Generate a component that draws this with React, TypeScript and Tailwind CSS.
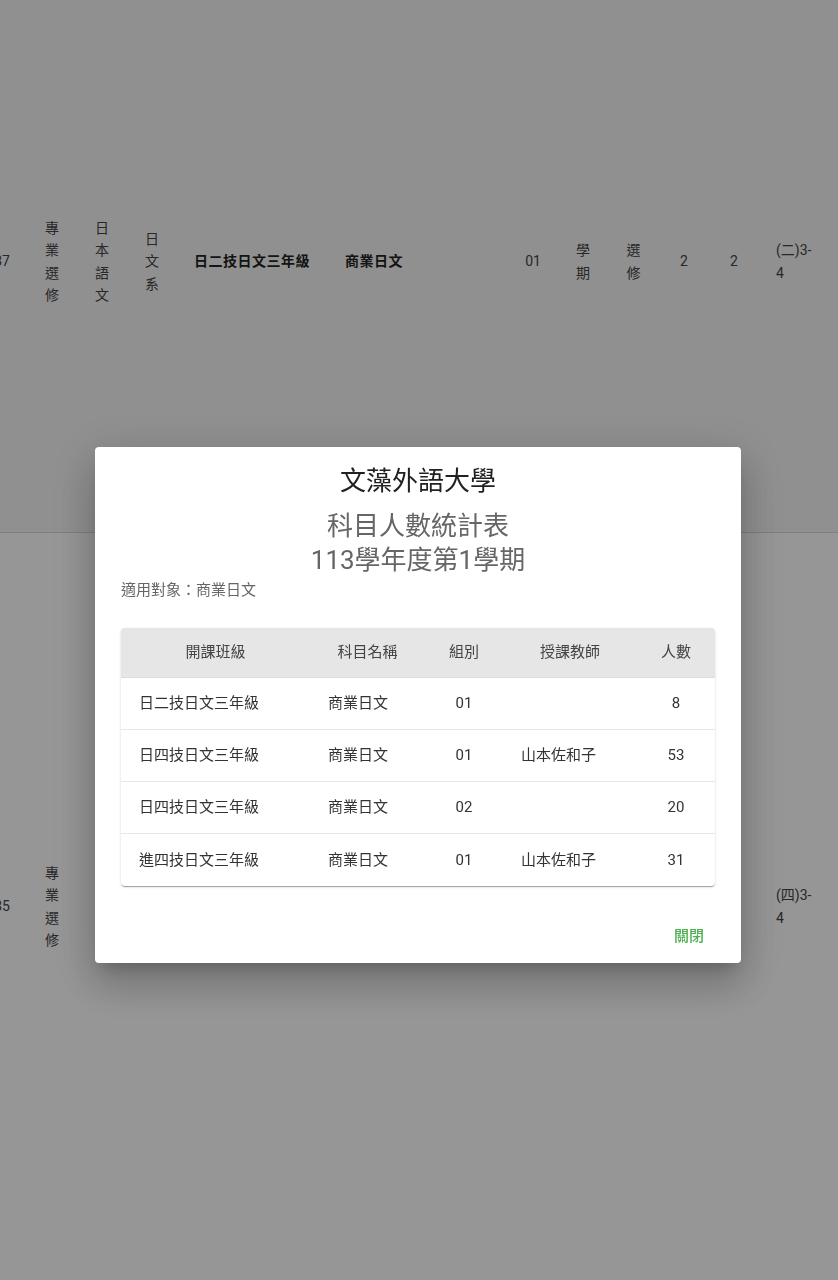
import React from 'react';

type Row = {
  id: string;
  kind: string;
  dept: string;
  school: string;
  klass: string;
  subject: string;
  group: string;
  term: string;
  type: string;
  credit: number | string;
  hours: number | string;
  time: [string, string];
};

const courseRows: Row[] = [
  {
    id: '37',
    kind: '專業選修',
    dept: '日本語文',
    school: '日文系',
    klass: '日二技日文三年級',
    subject: '商業日文',
    group: '01',
    term: '學期',
    type: '選修',
    credit: 2,
    hours: 2,
    time: ['(二)3-', '4'],
  },
  {
    id: '35',
    kind: '專業選修',
    dept: '',
    school: '',
    klass: '',
    subject: '',
    group: '',
    term: '',
    type: '',
    credit: '',
    hours: '',
    time: ['(四)3-', '4'],
  },
];

const stats = [
  { klass: '日二技日文三年級', subject: '商業日文', group: '01', teacher: '', count: 8 },
  { klass: '日四技日文三年級', subject: '商業日文', group: '01', teacher: '山本佐和子', count: 53 },
  { klass: '日四技日文三年級', subject: '商業日文', group: '02', teacher: '', count: 20 },
  { klass: '進四技日文三年級', subject: '商業日文', group: '01', teacher: '山本佐和子', count: 31 },
];

// one character per line, like the narrow cells of the course table
const Stack: React.FC<{ text: string }> = ({ text }) => (
  <div className="flex flex-col items-center leading-[22.5px]">
    {text.split('').map((ch, i) => (
      <span key={i}>{ch}</span>
    ))}
  </div>
);

const CourseRow: React.FC<{ row: Row; first: boolean }> = ({ row, first }) => (
  <div
    className={
      first
        ? 'flex items-center h-[533px] pb-[9px] bg-[#f5f5f5] border-b border-[#d6d6d6]'
        : 'flex items-center h-[747px] bg-white'
    }
  >
    <div className="w-[10px] flex justify-end whitespace-nowrap">{row.id}</div>
    <div className="w-[17px]" />
    <div className="w-[50px] flex justify-center"><Stack text={row.kind} /></div>
    <div className="w-[50px] flex justify-center"><Stack text={row.dept} /></div>
    <div className="w-[50px] flex justify-center"><Stack text={row.school} /></div>
    <div className="w-[150px] text-center font-semibold tracking-[0.5px] text-[#222]">{row.klass}</div>
    <div className="w-[94px] text-center font-semibold tracking-[0.5px] text-[#222]">{row.subject}</div>
    <div className="w-[87px]" />
    <div className="w-[50px] text-center">{row.group}</div>
    <div className="w-[50px] flex justify-center"><Stack text={row.term} /></div>
    <div className="w-[51px] flex justify-center"><Stack text={row.type} /></div>
    <div className="w-[50px] text-center">{row.credit}</div>
    <div className="w-[50px] text-center">{row.hours}</div>
    <div className="w-[17px]" />
    <div className="w-[50px] leading-[22.5px]">
      {row.time[0]}
      <br />
      {row.time[1]}
    </div>
  </div>
);

const App: React.FC = () => {
  return (
    <div className="relative h-[1280px] overflow-hidden bg-white text-[14px] text-[#444] font-['Roboto','Noto_Sans_CJK_TC',sans-serif]">
      {courseRows.map((row, i) => (
        <CourseRow key={row.id} row={row} first={i === 0} />
      ))}

      <div className="fixed inset-0 bg-black/[0.41] flex justify-start items-start pt-[447px] pl-[95px]">
        <div className="w-[646px] bg-white rounded-[4px] shadow-[0_11px_15px_-7px_rgba(0,0,0,0.2),0_24px_38px_3px_rgba(0,0,0,0.14),0_9px_46px_8px_rgba(0,0,0,0.12)] pt-[17px] pb-[16px]">
          <div className="text-center text-[26px] leading-[34px] text-[#212121]">文藻外語大學</div>
          <div className="mt-[11px] text-center text-[26px] leading-[34px] text-[#666]">
            <div>科目人數統計表</div>
            <div>113學年度第1學期</div>
          </div>

          <div className="px-[26px]">
            <div className="mt-[2px] text-[15px] leading-[22px] text-[#666]">適用對象：商業日文</div>

            <div className="mt-[27px] rounded-[4px] overflow-hidden bg-white shadow-[0_2px_1px_-1px_rgba(0,0,0,0.2),0_1px_1px_0_rgba(0,0,0,0.14),0_1px_3px_0_rgba(0,0,0,0.12)]">
              <div className="grid grid-cols-[189px_115px_78px_134px_78px] h-[50px] items-center bg-[#e6e6e6] text-[15px] text-[#444] border-b border-[#dcdcdc]">
                <div className="text-center">開課班級</div>
                <div className="text-center">科目名稱</div>
                <div className="text-center">組別</div>
                <div className="text-center">授課教師</div>
                <div className="text-center">人數</div>
              </div>
              {stats.map((s, i) => (
                <div
                  key={i}
                  className={
                    'grid grid-cols-[189px_115px_78px_134px_78px] h-[52px] items-center text-[15px] text-[#333]' +
                    (i < stats.length - 1 ? ' border-b border-[#e6e6e6]' : '')
                  }
                >
                  <div className="pl-[18px]">{s.klass}</div>
                  <div className="pl-[18px]">{s.subject}</div>
                  <div className="text-center">{s.group}</div>
                  <div className="pl-[18px]">{s.teacher}</div>
                  <div className="text-center">{s.count}</div>
                </div>
              ))}
            </div>
          </div>

          <div className="mt-[39px] flex justify-end pr-[37px]">
            <button className="text-[15px] leading-[22px] font-medium text-[#4caf50]">關閉</button>
          </div>
        </div>
      </div>
    </div>
  );
};

export default App;
